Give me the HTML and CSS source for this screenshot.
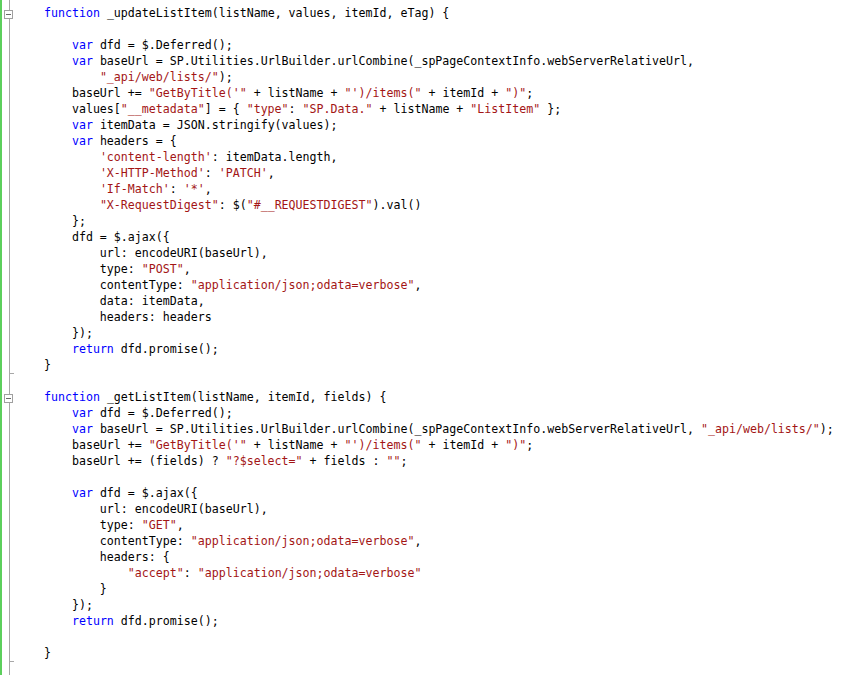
FILE: index.html
```html
<!DOCTYPE html>
<html>
<head>
<meta charset="utf-8">
<link rel="stylesheet" href="styles.css">
</head>
<body>
<div class="editor">
<div class="line"><span class="gut fold"></span><span class="code">    <span class="k">function</span> _updateListItem(listName, values, itemId, eTag) {</span></div>
<div class="line"><span class="gut"></span><span class="code"></span></div>
<div class="line"><span class="gut"></span><span class="code">        <span class="k">var</span> dfd = $.Deferred();</span></div>
<div class="line"><span class="gut"></span><span class="code">        <span class="k">var</span> baseUrl = SP.Utilities.UrlBuilder.urlCombine(_spPageContextInfo.webServerRelativeUrl,</span></div>
<div class="line"><span class="gut"></span><span class="code">            <span class="s">"_api/web/lists/"</span>);</span></div>
<div class="line"><span class="gut"></span><span class="code">        baseUrl += <span class="s">"GetByTitle('"</span> + listName + <span class="s">"')/items("</span> + itemId + <span class="s">")"</span>;</span></div>
<div class="line"><span class="gut"></span><span class="code">        values[<span class="s">"__metadata"</span>] = { <span class="s">"type"</span>: <span class="s">"SP.Data."</span> + listName + <span class="s">"ListItem"</span> };</span></div>
<div class="line"><span class="gut"></span><span class="code">        <span class="k">var</span> itemData = JSON.stringify(values);</span></div>
<div class="line"><span class="gut"></span><span class="code">        <span class="k">var</span> headers = {</span></div>
<div class="line"><span class="gut"></span><span class="code">            <span class="s">'content-length'</span>: itemData.length,</span></div>
<div class="line"><span class="gut"></span><span class="code">            <span class="s">'X-HTTP-Method'</span>: <span class="s">'PATCH'</span>,</span></div>
<div class="line"><span class="gut"></span><span class="code">            <span class="s">'If-Match'</span>: <span class="s">'*'</span>,</span></div>
<div class="line"><span class="gut"></span><span class="code">            <span class="s">"X-RequestDigest"</span>: $(<span class="s">"#__REQUESTDIGEST"</span>).val()</span></div>
<div class="line"><span class="gut"></span><span class="code">        };</span></div>
<div class="line"><span class="gut"></span><span class="code">        dfd = $.ajax({</span></div>
<div class="line"><span class="gut"></span><span class="code">            url: encodeURI(baseUrl),</span></div>
<div class="line"><span class="gut"></span><span class="code">            type: <span class="s">"POST"</span>,</span></div>
<div class="line"><span class="gut"></span><span class="code">            contentType: <span class="s">"application/json;odata=verbose"</span>,</span></div>
<div class="line"><span class="gut"></span><span class="code">            data: itemData,</span></div>
<div class="line"><span class="gut"></span><span class="code">            headers: headers</span></div>
<div class="line"><span class="gut"></span><span class="code">        });</span></div>
<div class="line"><span class="gut"></span><span class="code">        <span class="k">return</span> dfd.promise();</span></div>
<div class="line"><span class="gut end"></span><span class="code">    }</span></div>
<div class="line"><span class="gut"></span><span class="code"></span></div>
<div class="line"><span class="gut fold"></span><span class="code">    <span class="k">function</span> _getListItem(listName, itemId, fields) {</span></div>
<div class="line"><span class="gut"></span><span class="code">        <span class="k">var</span> dfd = $.Deferred();</span></div>
<div class="line"><span class="gut"></span><span class="code">        <span class="k">var</span> baseUrl = SP.Utilities.UrlBuilder.urlCombine(_spPageContextInfo.webServerRelativeUrl, <span class="s">"_api/web/lists/"</span>);</span></div>
<div class="line"><span class="gut"></span><span class="code">        baseUrl += <span class="s">"GetByTitle('"</span> + listName + <span class="s">"')/items("</span> + itemId + <span class="s">")"</span>;</span></div>
<div class="line"><span class="gut"></span><span class="code">        baseUrl += (fields) ? <span class="s">"?$select="</span> + fields : <span class="s">""</span>;</span></div>
<div class="line"><span class="gut"></span><span class="code"></span></div>
<div class="line"><span class="gut"></span><span class="code">        <span class="k">var</span> dfd = $.ajax({</span></div>
<div class="line"><span class="gut"></span><span class="code">            url: encodeURI(baseUrl),</span></div>
<div class="line"><span class="gut"></span><span class="code">            type: <span class="s">"GET"</span>,</span></div>
<div class="line"><span class="gut"></span><span class="code">            contentType: <span class="s">"application/json;odata=verbose"</span>,</span></div>
<div class="line"><span class="gut"></span><span class="code">            headers: {</span></div>
<div class="line"><span class="gut"></span><span class="code">                <span class="s">"accept"</span>: <span class="s">"application/json;odata=verbose"</span></span></div>
<div class="line"><span class="gut"></span><span class="code">            }</span></div>
<div class="line"><span class="gut"></span><span class="code">        });</span></div>
<div class="line"><span class="gut"></span><span class="code">        <span class="k">return</span> dfd.promise();</span></div>
<div class="line"><span class="gut"></span><span class="code"></span></div>
<div class="line"><span class="gut end"></span><span class="code">    }</span></div>
</div>
</body>
</html>
```
FILE: styles.css
```css
html, body {
  margin: 0;
  padding: 0;
  background: #ffffff;
}

.editor {
  min-height: 100vh;
  box-sizing: border-box;
  padding-top: 5px;
  background-image:
    linear-gradient(to right, #5ccf5c 0, #5ccf5c 2px, transparent 2px),
    linear-gradient(to right, transparent 9px, #a8a8a8 9px, #a8a8a8 10px, transparent 10px);
  background-repeat: no-repeat;
  background-size: 100% 100%;
}

.line {
  display: flex;
  height: 16px;
  line-height: 16px;
}

.gut {
  flex: none;
  width: 16px;
  position: relative;
}

.fold::before {
  content: "";
  position: absolute;
  left: 4px;
  top: 5px;
  width: 7px;
  height: 7px;
  border: 1px solid #a0a0a0;
  background: #ffffff;
}

.fold::after {
  content: "";
  position: absolute;
  left: 6px;
  top: 9px;
  width: 5px;
  height: 1px;
  background: #6a6a6a;
}

.end::after {
  content: "";
  position: absolute;
  left: 9px;
  bottom: -1px;
  width: 5px;
  height: 1px;
  background: #a8a8a8;
}

.code {
  font-family: "DejaVu Sans Mono", "Liberation Mono", monospace;
  font-size: 11.627px;
  white-space: pre;
  color: #000000;
}

.k {
  color: #0000ff;
}

.s {
  color: #a31515;
}
```
